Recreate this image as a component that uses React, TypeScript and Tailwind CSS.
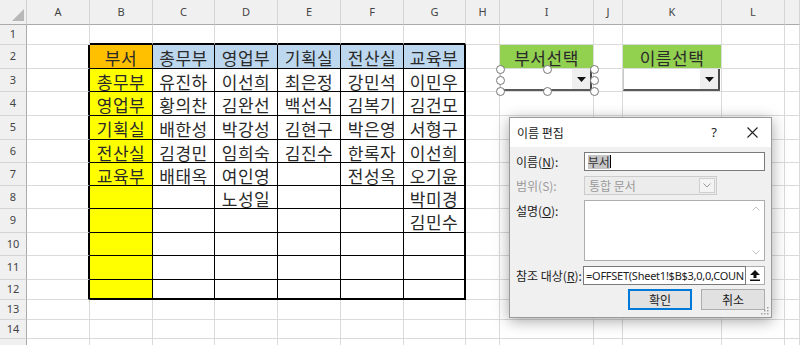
import React from "react";

const KR = "font-['Malgun_Gothic','Noto_Sans_CJK_KR',sans-serif]";

const COL_LETTERS = ["A", "B", "C", "D", "E", "F", "G", "H", "I", "J", "K", "L", ""];
const ROW_NUMS = [1, 2, 3, 4, 5, 6, 7, 8, 9, 10, 11, 12, 13, 14, 15];

// A..M per row
const DATA: Record<number, string[]> = {
  2: ["", "부서", "총무부", "영업부", "기획실", "전산실", "교육부", "", "부서선택", "", "이름선택", "", ""],
  3: ["", "총무부", "유진하", "이선희", "최은정", "강민석", "이민우"],
  4: ["", "영업부", "황의찬", "김완선", "백선식", "김복기", "김건모"],
  5: ["", "기획실", "배한성", "박강성", "김현구", "박은영", "서형구"],
  6: ["", "전산실", "김경민", "임희숙", "김진수", "한록자", "이선희"],
  7: ["", "교육부", "배태옥", "여인영", "", "전성옥", "오기윤"],
  8: ["", "", "", "노성일", "", "", "박미경"],
  9: ["", "", "", "", "", "", "김민수"],
};

function borderClass(r: number, c: number) {
  const inTable = r >= 2 && r <= 12 && c >= 1 && c <= 6;
  if (inTable) {
    if (c === 6 && r === 12) return "border-r-2 border-b-2 border-black";
    if (c === 6) return "border-r-2 border-b border-black";
    if (r === 12) return "border-r border-b-2 border-black";
    return "border-r border-b border-black";
  }
  if (c === 0 && r >= 2 && r <= 12) return "border-r-2 border-r-black border-b border-b-[#dadada]";
  if (r === 1 && c >= 1 && c <= 6) return "border-b-2 border-b-black border-r border-r-[#dadada]";
  return "border-r border-b border-[#dadada]";
}

function fillClass(r: number, c: number) {
  if (r === 2 && c === 1) return "bg-[#ffc000]";
  if (r === 2 && c >= 2 && c <= 6) return "bg-[#bdd7ee]";
  if (c === 1 && r >= 3 && r <= 12) return "bg-[#ffff00]";
  if (r === 2 && (c === 8 || c === 10)) return "bg-[#92d050]";
  return "bg-white";
}

function DownTri() {
  return (
    <svg width="9" height="5" viewBox="0 0 9 5">
      <polygon points="0,0 9,0 4.5,5" fill="#111" />
    </svg>
  );
}

function Combo({ width }: { width: string }) {
  return (
    <div className={`flex h-full ${width} border-l border-l-[#c8c8c8] border-b-2 border-b-[#5a5a5a] bg-white`}>
      <div className="flex-1" />
      <div className="flex w-[20px] items-center justify-center border-r-2 border-r-[#4a4a4a] bg-[#efefef]">
        <DownTri />
      </div>
    </div>
  );
}

function Handles() {
  const pos = [
    "left-[-4px] top-[-4px]",
    "left-[43px] top-[-4px]",
    "left-[90px] top-[-4px]",
    "left-[-4px] top-[7px]",
    "left-[90px] top-[7px]",
    "left-[-4px] top-[18px]",
    "left-[43px] top-[18px]",
    "left-[90px] top-[18px]",
  ];
  return (
    <>
      {pos.map((p) => (
        <span key={p} className={`absolute ${p} h-[9px] w-[9px] rounded-full border-[1.5px] border-[#777] bg-white`} />
      ))}
    </>
  );
}

function Cell({ r, c }: { r: number; c: number }) {
  const text = DATA[r]?.[c] ?? "";
  return (
    <div
      className={`relative flex items-center justify-center overflow-visible ${borderClass(r, c)} ${fillClass(r, c)} text-[17px] leading-none text-[#2a2a2a] ${KR}`}
    >
      {text && <span className="pt-[2px] tracking-[0.5px]">{text}</span>}
      {r === 3 && c === 8 && (
        <div className="absolute inset-0 z-10">
          <Combo width="w-[92px]" />
          <Handles />
        </div>
      )}
      {r === 3 && c === 10 && (
        <div className="absolute inset-0 z-10">
          <Combo width="w-[97px]" />
        </div>
      )}
    </div>
  );
}

function CollapseIcon() {
  return (
    <svg width="10" height="11" viewBox="0 0 10 11">
      <polygon points="5,0 10,5 6.5,5 6.5,8 3.5,8 3.5,5 0,5" fill="#111" />
      <rect x="0" y="9.5" width="10" height="1.5" fill="#111" />
    </svg>
  );
}

function NameDialog() {
  return (
    <div
      className={`absolute left-[509px] top-[117px] z-20 h-[201px] w-[263px] border border-[#9a9a9a] bg-[#f0f0f0] text-[12px] leading-none text-[#222] shadow-[0_3px_14px_rgba(0,0,0,0.35)] ${KR}`}
    >
      <div className="flex h-[29px] items-center bg-white pl-[7px]">
        <span>이름 편집</span>
        <span className="ml-auto mr-[30px] text-[13px] font-['Noto_Sans',sans-serif]">?</span>
        <svg width="11" height="11" viewBox="0 0 11 11" className="mr-[13px]">
          <path d="M0.5 0.5 L10.5 10.5 M10.5 0.5 L0.5 10.5" stroke="#222" strokeWidth="1.1" />
        </svg>
      </div>

      <div className="px-[6px]">
        <div className="mt-[5px] flex items-center">
          <div className="w-[68px]">
            이름(<span className="underline">N</span>):
          </div>
          <div className="flex h-[19px] w-[182px] items-center border border-[#7a7a7a] bg-white pl-[3px]">
            <span className="bg-[#c6c6c6] py-[1px] text-[#333]">부서</span>
            <span className="h-[13px] w-px bg-black" />
          </div>
        </div>

        <div className="mt-[5px] flex items-center text-[#9a9a9a]">
          <div className="w-[68px]">범위(S):</div>
          <div className="flex h-[19px] w-[133px] items-center border border-[#cccccc] bg-[#ececec] pl-[4px]">
            <span>통합 문서</span>
            <div className="ml-auto mr-px flex h-[15px] w-[16px] items-center justify-center border border-[#cfcfcf] bg-[#f4f4f4]">
              <svg width="8" height="5" viewBox="0 0 8 5">
                <path d="M0.5 0.5 L4 4 L7.5 0.5" fill="none" stroke="#9a9a9a" strokeWidth="1" />
              </svg>
            </div>
          </div>
        </div>

        <div className="mt-[5px] flex items-start">
          <div className="w-[68px] pt-[5px]">
            설명(<span className="underline">O</span>):
          </div>
          <div className="flex h-[61px] w-[182px] border border-[#adadad] bg-white">
            <div className="flex-1" />
            <div className="flex w-[16px] flex-col items-center justify-between py-[5px]">
              <svg width="8" height="5" viewBox="0 0 8 5">
                <path d="M0.5 4.5 L4 1 L7.5 4.5" fill="none" stroke="#c2c2c2" strokeWidth="1" />
              </svg>
              <svg width="8" height="5" viewBox="0 0 8 5">
                <path d="M0.5 0.5 L4 4 L7.5 0.5" fill="none" stroke="#c2c2c2" strokeWidth="1" />
              </svg>
            </div>
          </div>
        </div>

        <div className="mt-[5px] flex items-center">
          <div className="w-[68px] whitespace-nowrap">
            참조 대상(<span className="underline">R</span>):
          </div>
          <div className="flex h-[19px] w-[182px]">
            <div className="flex w-[163px] items-center overflow-hidden whitespace-nowrap border border-[#7a7a7a] bg-white pl-[2px] font-['Noto_Sans',sans-serif] text-[11px] tracking-[-0.25px] text-[#222]">
              =OFFSET(Sheet1!$B$3,0,0,COUN
            </div>
            <div className="flex w-[19px] items-center justify-center border border-l-0 border-[#adadad] bg-white">
              <CollapseIcon />
            </div>
          </div>
        </div>

        <div className="mt-[4px] flex justify-end gap-[9px]">
          <div className="flex h-[21px] w-[64px] items-center justify-center border-2 border-[#0078d7] bg-[#e1e1e1]">
            확인
          </div>
          <div className="flex h-[21px] w-[64px] items-center justify-center border border-[#adadad] bg-[#e1e1e1]">
            취소
          </div>
        </div>
      </div>

      <svg width="9" height="9" viewBox="0 0 9 9" className="absolute bottom-[2px] right-[2px]">
        <rect x="7" y="1" width="1.5" height="1.5" fill="#a0a0a0" />
        <rect x="4" y="4" width="1.5" height="1.5" fill="#a0a0a0" />
        <rect x="7" y="4" width="1.5" height="1.5" fill="#a0a0a0" />
        <rect x="1" y="7" width="1.5" height="1.5" fill="#a0a0a0" />
        <rect x="4" y="7" width="1.5" height="1.5" fill="#a0a0a0" />
        <rect x="7" y="7" width="1.5" height="1.5" fill="#a0a0a0" />
      </svg>
    </div>
  );
}

export default function App() {
  return (
    <div className="relative h-[345px] w-[800px] overflow-hidden bg-white">
      <div className="grid grid-cols-[27px_63px_63px_62px_63px_63px_63px_62px_34px_94px_29px_99px_63px_1fr] grid-rows-[25px_20px_24px_23px_24px_24px_23px_23px_23px_24px_23px_24px_20px_20px_19px_20px]">
        {/* corner */}
        <div className="relative border-r border-b border-r-[#d0d0d0] border-b-[#ababab] bg-[#f0f0f0]">
          <svg width="12" height="12" viewBox="0 0 12 12" className="absolute bottom-[3px] right-[2px]">
            <polygon points="12,0 12,12 0,12" fill="#b8b8b8" />
          </svg>
        </div>
        {COL_LETTERS.map((l, i) => (
          <div
            key={`h${i}`}
            className="flex items-center justify-center border-r border-b border-r-[#d4d4d4] border-b-[#ababab] bg-[#f0f0f0] font-['Noto_Sans',sans-serif] text-[11px] text-[#444]"
          >
            {l}
          </div>
        ))}
        {ROW_NUMS.map((r) => (
          <React.Fragment key={`r${r}`}>
            <div className="flex items-center justify-center border-r border-b border-r-[#ababab] border-b-[#d4d4d4] bg-[#f0f0f0] font-['Noto_Sans',sans-serif] text-[11px] text-[#444]">
              {r < 15 ? r : ""}
            </div>
            {COL_LETTERS.map((_, c) => (
              <Cell key={`c${r}-${c}`} r={r} c={c} />
            ))}
          </React.Fragment>
        ))}
      </div>
      <NameDialog />
    </div>
  );
}
